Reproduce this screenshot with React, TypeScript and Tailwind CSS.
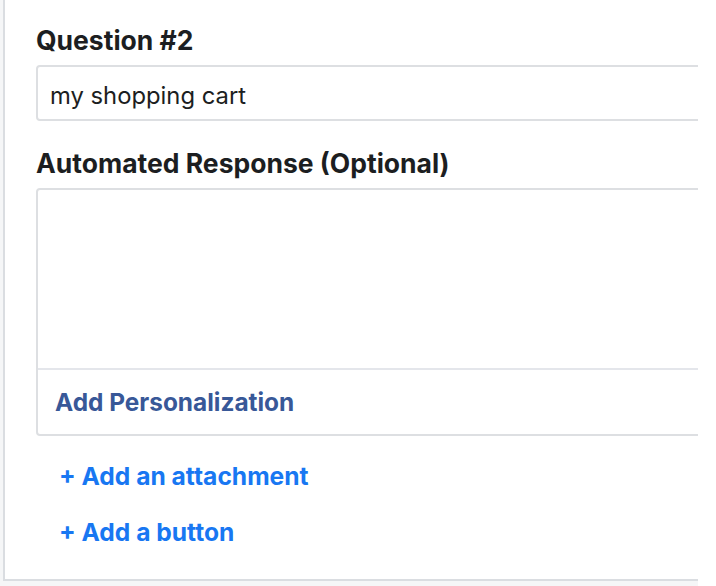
const font = { fontFamily: 'Inter, "Liberation Sans", Arial, sans-serif' };

function BoxField({ children, className = '' }: { children?: React.ReactNode; className?: string }) {
  return <div className={`-mr-3 rounded-[4px] border-2 border-[#dddfe2] bg-white ${className}`}>{children}</div>;
}

export default function App() {
  return (
    <div className="flex h-[586px] w-[716px] bg-white" style={font}>
      <div className="flex h-full w-[698px] flex-col bg-[#f5f6f7]">
        <div className="ml-[3px] flex h-[581px] flex-col overflow-hidden border-b-2 border-l-2 border-[#dadde1] bg-white pl-[31px] pt-[24px]">
          <h2 className="text-[26.5px] font-bold leading-[32px] text-[#1c1e21]">Question #2</h2>
          <BoxField className="mt-[9px] flex h-[56px] items-center px-[12px] pt-[6px]">
            <span className="text-[23.8px] text-[#1c1e21]">my shopping cart</span>
          </BoxField>
          <h2 className="mt-[26px] text-[26.5px] font-bold leading-[32px] text-[#1c1e21]">Automated Response (Optional)</h2>
          <BoxField className="mt-[9px] flex flex-col">
            <div className="h-[180px] border-b-2 border-[#e4e6eb]" />
            <div className="flex h-[64px] items-center px-[17px]">
              <span className="text-[24.4px] font-bold text-[#385898]">Add Personalization</span>
            </div>
          </BoxField>
          <div className="mt-[25px] flex flex-col gap-[26px] pl-[23px]">
            <button className="text-left text-[24.6px] font-bold leading-[30px] text-[#1877f2]">+ Add an attachment</button>
            <button className="text-left text-[24.6px] font-bold leading-[30px] text-[#1877f2]">+ Add a button</button>
          </div>
        </div>
      </div>
    </div>
  );
}
